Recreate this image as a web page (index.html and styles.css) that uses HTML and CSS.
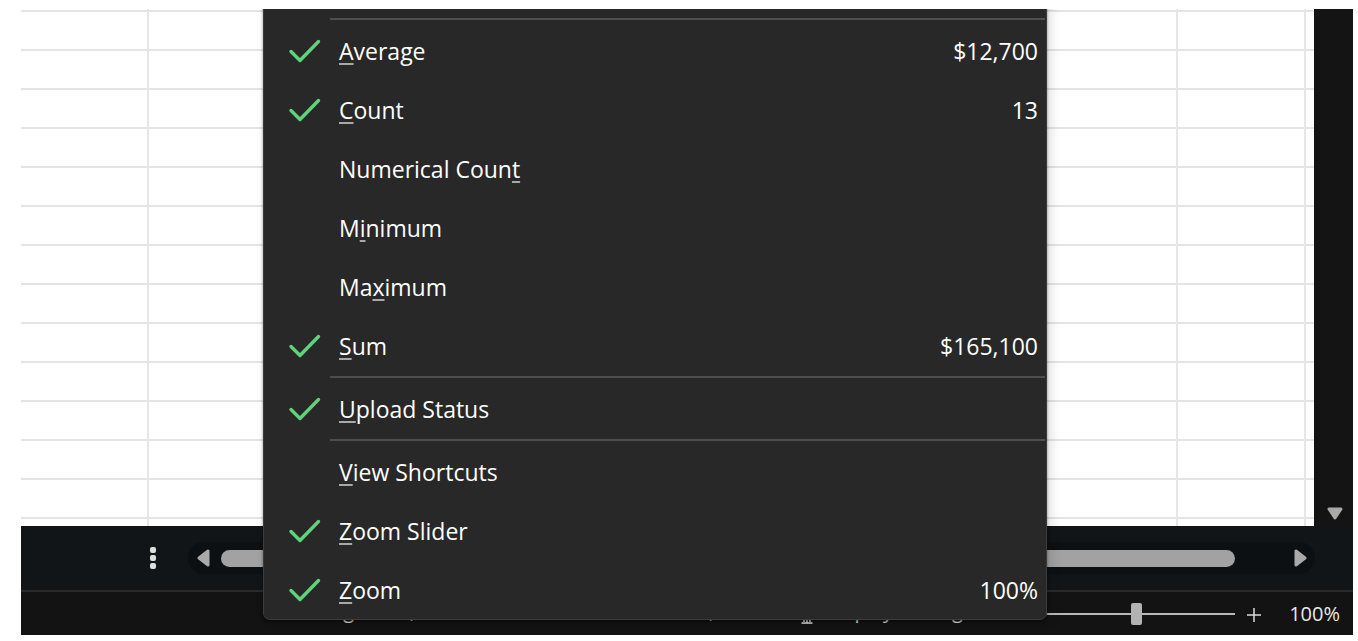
FILE: index.html
```html
<!DOCTYPE html>
<html lang="en">
<head>
<meta charset="utf-8">
<title>Status bar customization menu</title>
<link rel="stylesheet" href="styles.css">
</head>
<body>
<div class="frame">
  <div class="app">
    <div class="sheet-row">
      <div class="grid">
        <div class="col col-a"></div>
        <div class="col col-b"></div>
        <div class="col col-c"></div>
        <div class="col col-d"></div>
      </div>
      <div class="vscroll">
        <svg class="arrow-down" width="16" height="13" viewBox="0 0 16 13"><polygon points="2,2 14,2 8,11" fill="#a9a9a9" stroke="#a9a9a9" stroke-width="3" stroke-linejoin="round"/></svg>
      </div>
    </div>

    <div class="hbar">
      <div class="more"><i></i><i></i><i></i></div>
      <div class="track">
        <svg class="arrow" width="13" height="18" viewBox="0 0 13 18"><polygon points="11,2 11,16 2,9" fill="#a9a9a9" stroke="#a9a9a9" stroke-width="3" stroke-linejoin="round"/></svg>
        <div class="thumb"></div>
        <svg class="arrow arrow-right" width="13" height="18" viewBox="0 0 13 18"><polygon points="2,2 2,16 11,9" fill="#a9a9a9" stroke="#a9a9a9" stroke-width="3" stroke-linejoin="round"/></svg>
      </div>
    </div>

    <div class="status">
      <span class="stat">Average: $12,700</span>
      <span class="stat">Count: 13</span>
      <span class="stat">Sum: $165,100</span>
      <svg class="display-icon" width="20" height="24" viewBox="0 0 20 24"><rect x="1.5" y="2" width="17" height="13" rx="1.5" fill="none" stroke="#e6e6e6" stroke-width="1.6"/><path d="M7 15v6M13 15v6M4.5 22h11M10 18v4" fill="none" stroke="#e6e6e6" stroke-width="1.6"/></svg>
      <span class="stat display">Display Settings</span>
      <div class="zoomer">
        <span class="minus">−</span>
        <div class="slider"><div class="knob"></div></div>
        <svg class="plus" width="16" height="16" viewBox="0 0 16 16"><path d="M8 1v14M1 8h14" stroke="#dcdcdc" stroke-width="1.5" fill="none"/></svg>
        <span class="pct">100%</span>
      </div>
    </div>

    <div class="menu">
      <div class="sep"></div>
      <div class="item"><span class="chk"><svg width="33" height="26" viewBox="0 0 33 26"><path d="M3 13.5 L12 22.5 L30.5 3.5" fill="none" stroke="#5fd27a" stroke-width="3.4" stroke-linecap="round" stroke-linejoin="round"/></svg></span><span class="label"><span class="ak">A</span>verage</span><span class="val">$12,700</span></div>
      <div class="item"><span class="chk"><svg width="33" height="26" viewBox="0 0 33 26"><path d="M3 13.5 L12 22.5 L30.5 3.5" fill="none" stroke="#5fd27a" stroke-width="3.4" stroke-linecap="round" stroke-linejoin="round"/></svg></span><span class="label"><span class="ak">C</span>ount</span><span class="val">13</span></div>
      <div class="item"><span class="chk"></span><span class="label">Numerical Coun<span class="ak">t</span></span><span class="val"></span></div>
      <div class="item"><span class="chk"></span><span class="label">M<span class="ak">i</span>nimum</span><span class="val"></span></div>
      <div class="item"><span class="chk"></span><span class="label">Ma<span class="ak">x</span>imum</span><span class="val"></span></div>
      <div class="item"><span class="chk"><svg width="33" height="26" viewBox="0 0 33 26"><path d="M3 13.5 L12 22.5 L30.5 3.5" fill="none" stroke="#5fd27a" stroke-width="3.4" stroke-linecap="round" stroke-linejoin="round"/></svg></span><span class="label"><span class="ak">S</span>um</span><span class="val">$165,100</span></div>
      <div class="sep"></div>
      <div class="item"><span class="chk"><svg width="33" height="26" viewBox="0 0 33 26"><path d="M3 13.5 L12 22.5 L30.5 3.5" fill="none" stroke="#5fd27a" stroke-width="3.4" stroke-linecap="round" stroke-linejoin="round"/></svg></span><span class="label"><span class="ak">U</span>pload Status</span><span class="val"></span></div>
      <div class="sep"></div>
      <div class="item"><span class="chk"></span><span class="label"><span class="ak">V</span>iew Shortcuts</span><span class="val"></span></div>
      <div class="item"><span class="chk"><svg width="33" height="26" viewBox="0 0 33 26"><path d="M3 13.5 L12 22.5 L30.5 3.5" fill="none" stroke="#5fd27a" stroke-width="3.4" stroke-linecap="round" stroke-linejoin="round"/></svg></span><span class="label"><span class="ak">Z</span>oom Slider</span><span class="val"></span></div>
      <div class="item"><span class="chk"><svg width="33" height="26" viewBox="0 0 33 26"><path d="M3 13.5 L12 22.5 L30.5 3.5" fill="none" stroke="#5fd27a" stroke-width="3.4" stroke-linecap="round" stroke-linejoin="round"/></svg></span><span class="label"><span class="ak">Z</span>oom</span><span class="val">100%</span></div>
    </div>
  </div>
</div>
</body>
</html>
```

FILE: styles.css
```css
* { box-sizing: border-box; }

html, body {
  margin: 0;
  background: #ffffff;
}

body {
  width: 1358px;
  height: 641px;
  overflow: hidden;
  font-family: "Open Sans", "Noto Sans", sans-serif;
}

.frame {
  height: 641px;
  padding: 9px 5px 6px 21px;
}

.app {
  position: relative;
  width: 1332px;
  height: 626px;
  overflow: hidden;
  display: flex;
  flex-direction: column;
}

/* ---------- sheet ---------- */
.sheet-row {
  height: 517px;
  display: flex;
  flex-shrink: 0;
}

.grid {
  flex: 1;
  display: grid;
  grid-template-columns: 128px 1029px 128px 1fr;
  background-color: #ffffff;
  background-image: repeating-linear-gradient(to bottom, transparent 0 1px, #e4e4e4 1px 3px, transparent 3px 39px);
}

.col { border-right: 2px solid #e6e6e6; }
.col-d { border-right: 0; }

.vscroll {
  width: 39px;
  background: #141414;
  display: flex;
  align-items: flex-end;
  padding: 0 0 6px 13px;
}

/* ---------- horizontal scroll bar ---------- */
.hbar {
  height: 64px;
  flex-shrink: 0;
  background: #111517;
  display: flex;
  align-items: center;
  padding-left: 129px;
}

.more {
  width: 6px;
  display: flex;
  flex-direction: column;
  gap: 2.5px;
}

.more i {
  display: block;
  width: 6px;
  height: 5.5px;
  border-radius: 2px;
  background: #dedede;
}

.track {
  margin-left: 32px;
  width: 1127px;
  height: 32px;
  border-radius: 16px;
  background: #0d1012;
  display: flex;
  align-items: center;
  padding: 0 8px 0 9px;
}

.thumb {
  margin-left: 11px;
  width: 1014px;
  height: 17px;
  border-radius: 9px;
  background: #a2a2a2;
}

.arrow-right { margin-left: auto; }

/* ---------- status bar ---------- */
.status {
  height: 45px;
  flex-shrink: 0;
  border-top: 2px solid #2a2a2a;
  background: #131313;
  display: flex;
  align-items: center;
  padding: 0 13px 0 269px;
  color: #e8e8e8;
  font-size: 20px;
  line-height: 20px;
  white-space: nowrap;
}

.stat { margin-bottom: 5px; }
.stat + .stat { margin-left: 36px; }

.display-icon { margin-left: 48px; margin-bottom: 1px; }
.stat.display { margin-left: 9px; }

.zoomer {
  margin-left: auto;
  display: flex;
  align-items: center;
}

.minus { margin-right: 10px; }

.slider {
  position: relative;
  width: 196px;
  height: 2px;
  background: #b8b8b8;
}

.knob {
  position: absolute;
  left: 92px;
  top: -10px;
  width: 11px;
  height: 22px;
  border-radius: 2px;
  background: #b3b3b3;
}

.plus { margin-left: 11px; margin-top: 3px; }

.pct { margin-left: 27px; margin-top: 1px; }

/* ---------- context menu ---------- */
.menu {
  position: absolute;
  left: 242px;
  bottom: 15px;
  width: 784px;
  padding-top: 40px;
  background: #282828;
  border: 1px solid #3c3c3c;
  border-radius: 7px;
  box-shadow: 0 2px 3px rgba(0, 0, 0, 0.45), 4px 0 12px rgba(0, 0, 0, 0.12);
  color: #ffffff;
}

.sep {
  height: 2px;
  margin: 1px 1px 1px 66px;
  background: #4e4e4e;
}

.item {
  height: 59px;
  display: grid;
  grid-template-columns: 75px 1fr auto;
  align-items: center;
  padding-right: 8px;
  font-size: 23px;
  white-space: nowrap;
}

.chk {
  display: flex;
  justify-content: flex-start;
  padding-left: 24px;
  height: 26px;
}

.ak {
  text-decoration: underline;
  text-decoration-color: #a8a8a8;
  text-decoration-thickness: 2px;
  text-underline-offset: 3px;
}

.val { text-align: right; }
```
